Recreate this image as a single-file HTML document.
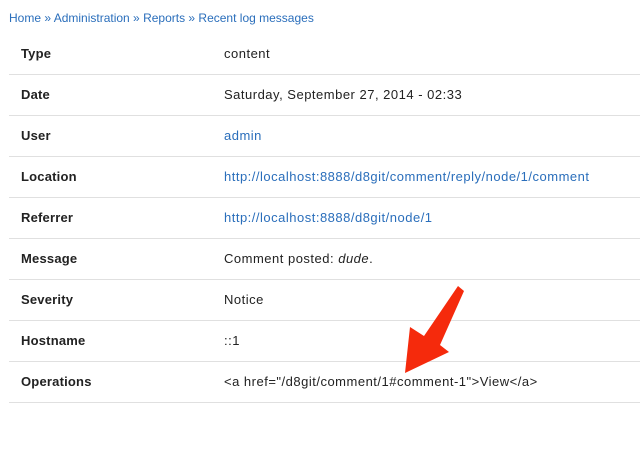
<!DOCTYPE html>
<html><head><meta charset="utf-8"><style>
body{margin:0;background:#fff;font-family:"Liberation Sans",sans-serif;font-size:13px;letter-spacing:0.5px;color:#222;width:640px;height:458px;overflow:hidden;position:relative}
.bc{position:absolute;left:9px;top:11px;font-size:12px;letter-spacing:0;color:#2a6ebb}
.row{position:absolute;left:9px;width:631px;height:41px;border-bottom:1px solid #e0e0e0}
.row .l{position:absolute;left:12px;top:0;line-height:41px;font-weight:bold;letter-spacing:0.2px}
.row .v{position:absolute;left:215px;top:0;line-height:41px;white-space:nowrap}
a{color:#2a6ebb;text-decoration:none}
</style></head><body>
<div class="bc">Home » Administration » Reports » Recent log messages</div>
<div class="row" style="top:33px"><div class="l">Type</div><div class="v">content</div></div>
<div class="row" style="top:74px"><div class="l">Date</div><div class="v">Saturday, September 27, 2014 - 02:33</div></div>
<div class="row" style="top:115px"><div class="l">User</div><div class="v"><a>admin</a></div></div>
<div class="row" style="top:156px"><div class="l">Location</div><div class="v"><a>http://localhost:8888/d8git/comment/reply/node/1/comment</a></div></div>
<div class="row" style="top:197px"><div class="l">Referrer</div><div class="v"><a>http://localhost:8888/d8git/node/1</a></div></div>
<div class="row" style="top:238px"><div class="l">Message</div><div class="v">Comment posted: <i>dude</i>.</div></div>
<div class="row" style="top:279px"><div class="l">Severity</div><div class="v">Notice</div></div>
<div class="row" style="top:320px"><div class="l">Hostname</div><div class="v">::1</div></div>
<div class="row" style="top:361px"><div class="l">Operations</div><div class="v">&lt;a href="/d8git/comment/1#comment-1"&gt;View&lt;/a&gt;</div></div>
<svg style="position:absolute;left:0;top:0" width="640" height="458">
<polygon points="458,286 464,291 440,345 449,352 405,373 410,327 424,336" fill="#f52a0c"/>
</svg>
</body></html>
